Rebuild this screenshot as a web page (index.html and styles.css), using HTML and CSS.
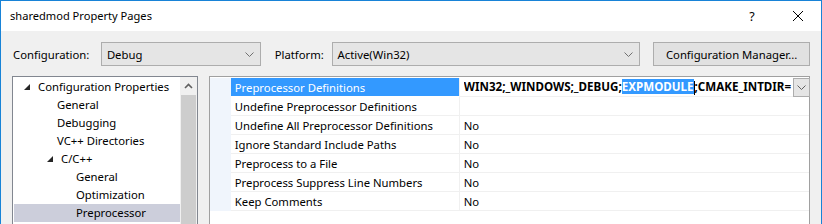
FILE: index.html
```html
<!DOCTYPE html>
<html>
<head>
<meta charset="utf-8">
<link rel="stylesheet" href="styles.css">
</head>
<body>
<div class="window">
  <div class="titlebar">
    <div class="title">sharedmod Property Pages</div>
    <div class="tb-btn help">?</div>
    <div class="tb-btn close">
      <svg width="10" height="10" viewBox="0 0 10 10"><path d="M0 0L10 10M10 0L0 10" stroke="#000" stroke-width="1" fill="none"/></svg>
    </div>
  </div>
  <div class="content">
    <div class="toolbar">
      <div class="lbl lbl-config">Configuration:</div>
      <div class="combo combo-config"><span>Debug</span><svg class="chev" width="9" height="5" viewBox="0 0 9 5"><path d="M0.5 0.5L4.5 4.5L8.5 0.5" stroke="#707070" fill="none"/></svg></div>
      <div class="lbl lbl-platform">Platform:</div>
      <div class="combo combo-platform"><span>Active(Win32)</span><svg class="chev" width="9" height="5" viewBox="0 0 9 5"><path d="M0.5 0.5L4.5 4.5L8.5 0.5" stroke="#707070" fill="none"/></svg></div>
      <div class="button">Configuration Manager...</div>
    </div>
    <div class="panels">
      <div class="tree">
        <div class="tree-items">
          <div class="node l0"><svg class="tri" width="6" height="6" viewBox="0 0 6 6"><path d="M6 0V6H0Z" fill="#262626"/></svg>Configuration Properties</div>
          <div class="node l1">General</div>
          <div class="node l1">Debugging</div>
          <div class="node l1">VC++ Directories</div>
          <div class="node l1 exp"><svg class="tri" width="6" height="6" viewBox="0 0 6 6"><path d="M6 0V6H0Z" fill="#262626"/></svg>C/C++</div>
          <div class="node l2">General</div>
          <div class="node l2">Optimization</div>
          <div class="node l2 sel">Preprocessor</div>
        </div>
        <div class="scrollbar">
          <div class="sb-up"><svg width="9" height="6" viewBox="0 0 9 6"><path d="M1 5L4.5 1.5L8 5" stroke="#606060" stroke-width="1.6" fill="none"/></svg></div>
          <div class="sb-thumb"></div>
        </div>
      </div>
      <div class="grid-panel">
        <div class="grid">
          <div class="row selrow">
            <div class="gutter"></div>
            <div class="name">Preprocessor Definitions</div>
            <div class="value bold"><span class="val-text">WIN32;_WINDOWS;_DEBUG;<span class="hl">EXPMODULE</span><span class="caret"></span>;CMAKE_INTDIR=</span><div class="dd"><svg width="9" height="5" viewBox="0 0 9 5"><path d="M0.5 0.5L4.5 4.5L8.5 0.5" stroke="#606060" fill="none"/></svg></div></div>
          </div>
          <div class="row">
            <div class="gutter"></div>
            <div class="name">Undefine Preprocessor Definitions</div>
            <div class="value"></div>
          </div>
          <div class="row">
            <div class="gutter"></div>
            <div class="name">Undefine All Preprocessor Definitions</div>
            <div class="value">No</div>
          </div>
          <div class="row">
            <div class="gutter"></div>
            <div class="name">Ignore Standard Include Paths</div>
            <div class="value">No</div>
          </div>
          <div class="row">
            <div class="gutter"></div>
            <div class="name">Preprocess to a File</div>
            <div class="value">No</div>
          </div>
          <div class="row">
            <div class="gutter"></div>
            <div class="name">Preprocess Suppress Line Numbers</div>
            <div class="value">No</div>
          </div>
          <div class="row">
            <div class="gutter"></div>
            <div class="name">Keep Comments</div>
            <div class="value">No</div>
          </div>
        </div>
      </div>
    </div>
  </div>
</div>
</body>
</html>
```

FILE: styles.css
```css
* { box-sizing: border-box; }
html, body { margin: 0; padding: 0; background: #f0f0f0; }
body {
  font-family: "Noto Sans", "DejaVu Sans", sans-serif;
  font-size: 11.3px;
  color: #000;
}
.window {
  width: 822px;
  height: 224px;
  border: 1px solid #1883d7;
  border-bottom: 0;
  display: flex;
  flex-direction: column;
  overflow: hidden;
  background: #f0f0f0;
}
.titlebar {
  height: 30px;
  flex: none;
  background: #fff;
  display: flex;
  align-items: center;
}
.title {
  flex: 1;
  padding-left: 9px;
  padding-bottom: 1px;
  font-size: 11.1px;
}
.tb-btn {
  width: 46px;
  height: 30px;
  display: flex;
  align-items: center;
  justify-content: center;
}
.help { font-size: 12.5px; padding-top: 1px; }
.close svg { display: block; }
.content {
  flex: 1;
  padding: 11px 11px 0 11px;
  display: flex;
  flex-direction: column;
  min-height: 0;
}
.toolbar {
  display: flex;
  align-items: center;
  height: 24px;
  flex: none;
}
.lbl { padding-left: 1px; }
.lbl-config { width: 89px; }
.lbl-platform { width: 58px; margin-left: 13px; }
.combo {
  height: 24px;
  background: #e5e5e5;
  border: 1px solid #adadad;
  display: flex;
  align-items: center;
  padding-left: 5px;
  padding-right: 6px;
}
.combo span { flex: 1; }
.combo-config { width: 160px; }
.combo-platform { width: 309px; }
.chev { display: block; }
.button {
  margin-left: 13px;
  width: 157px;
  height: 24px;
  background: #e1e1e1;
  border: 1px solid #adadad;
  display: flex;
  align-items: center;
  justify-content: center;
}
.panels {
  display: flex;
  margin-top: 10px;
  flex: 1;
  min-height: 0;
}
.tree {
  width: 186px;
  border: 1px solid #828790;
  border-bottom: 0;
  background: #fff;
  display: flex;
  padding: 1px 0 0 1px;
}
.tree-items {
  flex: 1;
  display: flex;
  flex-direction: column;
}
.node {
  height: 18px;
  display: flex;
  align-items: center;
  white-space: nowrap;
  padding-bottom: 1px;
}
.node.l0 { padding-left: 24px; }
.node.l1 { padding-left: 43px; }
.node.l1.exp { padding-left: 33px; }
.node.l2 { padding-left: 62px; }
.tri { margin-left: -14px; margin-right: 8px; margin-top: 1px; }
.node.l1.exp .tri { margin-left: 0; margin-right: 8px; }
.node.sel { background: #cccedb; }
.scrollbar {
  width: 17px;
  background: #f0f0f0;
  display: flex;
  flex-direction: column;
  margin-top: -1px;
}
.sb-up {
  height: 18px;
  display: flex;
  align-items: center;
  justify-content: center;
}
.sb-thumb {
  flex: 1;
  background: #cdcdcd;
  margin: 0 1px;
}
.grid-panel {
  margin-left: 11px;
  width: 602px;
  border: 1px solid #a0a0a0;
  border-bottom: 0;
  background: #fff;
  padding-top: 1px;
}
.grid { display: flex; flex-direction: column; }
.row {
  display: flex;
  height: 19px;
}
.gutter {
  width: 21px;
  background: #f0f5fc;
}
.name {
  width: 229px;
  padding-left: 4px;
  border-bottom: 1px solid #f0f0f0;
  border-right: 1px solid #f0f0f0;
  display: flex;
  align-items: center;
  white-space: nowrap;
}
.value {
  flex: 1;
  padding-left: 4px;
  border-bottom: 1px solid #f0f0f0;
  display: flex;
  align-items: center;
  white-space: nowrap;
  min-width: 0;
}
.selrow .name {
  background: #3399ff;
  color: #fff;
  border-bottom-color: #fff;
}
.bold { font-weight: bold; font-size: 11.6px; }
.val-text { flex: 1; overflow: hidden; }
.hl { background: #3399ff; color: #fff; }
.caret {
  display: inline-block;
  width: 1px;
  height: 14px;
  background: #000;
  vertical-align: middle;
}
.dd {
  width: 17px;
  height: 19px;
  background: #e5e5e5;
  border: 1px solid #adadad;
  display: flex;
  align-items: center;
  justify-content: center;
  align-self: flex-start;
  margin-right: -1px;
}
```
